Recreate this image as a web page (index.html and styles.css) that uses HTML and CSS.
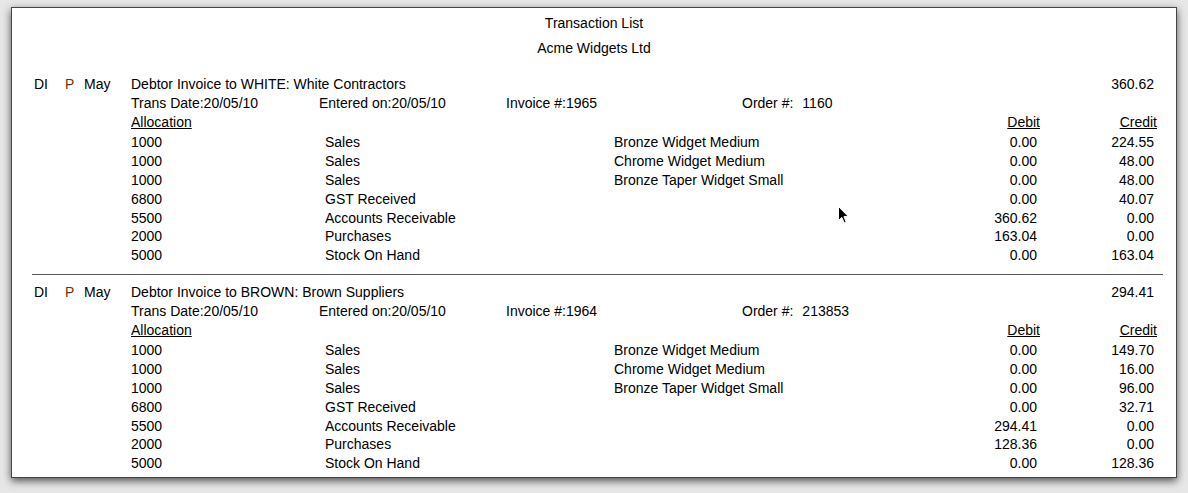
FILE: index.html
```html
<!DOCTYPE html>
<html>
<head>
<meta charset="utf-8">
<title>Transaction List</title>
<link rel="stylesheet" href="styles.css">
</head>
<body>
<div class="page">
  <div class="title">
    <div>Transaction List</div>
    <div>Acme Widgets Ltd</div>
  </div>

  <section class="txn">
    <div class="head"><span>DI</span><span class="posted">P</span><span>May</span><span>Debtor Invoice to WHITE: White Contractors</span><span class="amt">360.62</span></div>
    <div class="meta"><span>Trans Date:20/05/10</span><span>Entered on:20/05/10</span><span>Invoice #:1965</span><span>Order #:<span class="ord">1160</span></span></div>
    <div class="alloc alloc-head"><span class="u">Allocation</span><span></span><span></span><span class="num hd"><span class="u">Debit</span></span><span class="num hd"><span class="u">Credit</span></span></div>
    <div class="alloc"><span>1000</span><span>Sales</span><span>Bronze Widget Medium</span><span class="num">0.00</span><span class="num">224.55</span></div>
    <div class="alloc"><span>1000</span><span>Sales</span><span>Chrome Widget Medium</span><span class="num">0.00</span><span class="num">48.00</span></div>
    <div class="alloc"><span>1000</span><span>Sales</span><span>Bronze Taper Widget Small</span><span class="num">0.00</span><span class="num">48.00</span></div>
    <div class="alloc"><span>6800</span><span>GST Received</span><span></span><span class="num">0.00</span><span class="num">40.07</span></div>
    <div class="alloc"><span>5500</span><span>Accounts Receivable</span><span></span><span class="num">360.62</span><span class="num">0.00</span></div>
    <div class="alloc"><span>2000</span><span>Purchases</span><span></span><span class="num">163.04</span><span class="num">0.00</span></div>
    <div class="alloc"><span>5000</span><span>Stock On Hand</span><span></span><span class="num">0.00</span><span class="num">163.04</span></div>
  </section>

  <div class="sep"></div>

  <section class="txn">
    <div class="head"><span>DI</span><span class="posted">P</span><span>May</span><span>Debtor Invoice to BROWN: Brown Suppliers</span><span class="amt">294.41</span></div>
    <div class="meta"><span>Trans Date:20/05/10</span><span>Entered on:20/05/10</span><span>Invoice #:1964</span><span>Order #:<span class="ord">213853</span></span></div>
    <div class="alloc alloc-head"><span class="u">Allocation</span><span></span><span></span><span class="num hd"><span class="u">Debit</span></span><span class="num hd"><span class="u">Credit</span></span></div>
    <div class="alloc"><span>1000</span><span>Sales</span><span>Bronze Widget Medium</span><span class="num">0.00</span><span class="num">149.70</span></div>
    <div class="alloc"><span>1000</span><span>Sales</span><span>Chrome Widget Medium</span><span class="num">0.00</span><span class="num">16.00</span></div>
    <div class="alloc"><span>1000</span><span>Sales</span><span>Bronze Taper Widget Small</span><span class="num">0.00</span><span class="num">96.00</span></div>
    <div class="alloc"><span>6800</span><span>GST Received</span><span></span><span class="num">0.00</span><span class="num">32.71</span></div>
    <div class="alloc"><span>5500</span><span>Accounts Receivable</span><span></span><span class="num">294.41</span><span class="num">0.00</span></div>
    <div class="alloc"><span>2000</span><span>Purchases</span><span></span><span class="num">128.36</span><span class="num">0.00</span></div>
    <div class="alloc"><span>5000</span><span>Stock On Hand</span><span></span><span class="num">0.00</span><span class="num">128.36</span></div>
  </section>

  <svg class="cursor" width="14" height="20" viewBox="0 0 14 20">
    <path d="M1.5 1.5 L1.5 15.5 L4.8 12.4 L7.2 17.8 L9.2 16.9 L6.9 11.6 L11.3 11.6 Z" fill="#000" stroke="#fff" stroke-width="1" stroke-linejoin="round"/>
  </svg>
</div>
</body>
</html>
```

FILE: styles.css
```css
html, body {
  margin: 0;
  padding: 0;
}

body {
  background: #e7e7e7;
  padding: 7px 0 0 11px;
  font-family: "Liberation Sans", Arial, sans-serif;
  font-size: 14px;
  color: #000;
  width: 1188px;
  height: 493px;
  box-sizing: border-box;
  overflow: hidden;
}

.page {
  position: relative;
  box-sizing: border-box;
  width: 1166px;
  height: 471px;
  background: #fff;
  border: 1px solid #454545;
  box-shadow: 0 3px 8px rgba(0, 0, 0, 0.65);
  padding-top: 2.5px;
}

.title {
  text-align: center;
  line-height: 25px;
  margin-bottom: 14.5px;
}

.txn {
  padding: 0 22px;
  line-height: 18.8px;
}

.head {
  display: grid;
  grid-template-columns: 31px 19px 47px 1fr auto;
}

.posted {
  color: #7e2a0c;
}

.amt {
  text-align: right;
}

.meta {
  margin-left: 97px;
  display: grid;
  grid-template-columns: 188px 187px 236px 1fr;
}

.ord {
  margin-left: 9px;
}

.alloc {
  margin-left: 97px;
  display: grid;
  grid-template-columns: 194px 289px 1fr 120px 117px;
  white-space: nowrap;
}

.alloc-head {
  margin-bottom: 2px;
}

.num {
  text-align: right;
}

.hd {
  margin-right: -3px;
}

.u {
  text-decoration: underline;
}

.sep {
  height: 1px;
  background: #555;
  margin: 9.2px 13px 7.8px 20px;
}

.cursor {
  position: absolute;
  left: 825px;
  top: 197px;
}
```
